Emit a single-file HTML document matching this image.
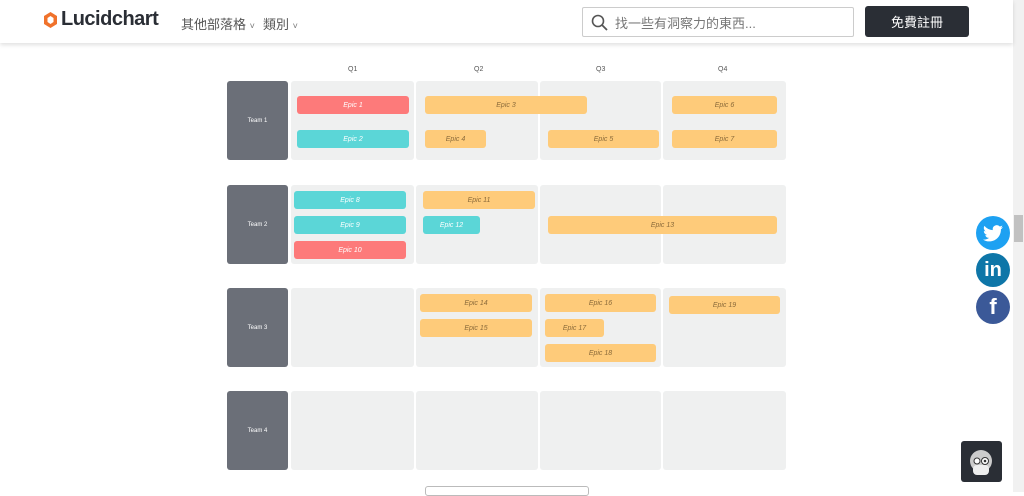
<!DOCTYPE html><html><head><meta charset="utf-8"><style>
*{margin:0;padding:0;box-sizing:border-box}
body{width:1024px;height:492px;overflow:hidden;background:#fff;position:relative;font-family:"Liberation Sans","Noto Sans CJK TC",sans-serif}
.a{position:absolute}
.hdr{left:0;top:0;width:1013px;height:43px;background:#fff;box-shadow:0 2px 4px rgba(0,0,0,.12);z-index:2}
.cell{background:#eff0f0;border-radius:3px}
.team{background:#6b6f78;border-radius:3px;color:#fff;font-size:6px;display:flex;align-items:center;justify-content:center}
.b{border-radius:3px;font-size:7px;font-style:italic;display:flex;align-items:center;justify-content:center;height:18px}
.r{background:#fd7a7a;color:#fff}.t{background:#5bd6d7;color:#fff}.o{background:#fecb7a;color:#8a6a3a}
.q{font-size:7px;color:#555;top:66px}
.soc{width:34px;height:34px;border-radius:50%;color:#fff;font-weight:bold;display:flex;align-items:center;justify-content:center}
.chev{font-size:9px;color:#777}
</style></head><body>
<div class="a hdr">
 <div class="a" style="left:44px;top:12px;width:13px;height:16px">
  <svg width="13" height="16" viewBox="0 0 13 16"><path d="M6.5 0L13 4v8L6.5 16 0 12V4z" fill="#f0722b"/><path d="M6.5 4L9.5 6v4L6.5 12 3.5 10V6z" fill="#fff"/></svg></div>
 <div class="a" style="left:61px;top:8px;font-size:20px;font-weight:bold;color:#2a2e35;letter-spacing:-0.5px">Lucidchart</div>
 <div class="a" style="left:181px;top:14px;font-size:13px;color:#555">其他部落格 <span class="chev">˅</span></div>
 <div class="a" style="left:263px;top:14px;font-size:13px;color:#555">類別 <span class="chev">˅</span></div>
 <div class="a" style="left:582px;top:7px;width:272px;height:30px;border:1px solid #ccc;border-radius:2px">
  <svg class="a" style="left:8px;top:6px" width="18" height="18" viewBox="0 0 18 18"><circle cx="7" cy="7" r="5.5" stroke="#555" stroke-width="1.6" fill="none"/><path d="M11 11l5 5" stroke="#555" stroke-width="1.8"/></svg>
  <div class="a" style="left:32px;top:5px;font-size:13px;color:#777">找一些有洞察力的東西...</div></div>
 <div class="a" style="left:865px;top:6px;width:104px;height:31px;background:#2a2e35;border-radius:3px;color:#fff;font-size:13px;display:flex;align-items:center;justify-content:center">免費註冊</div>
</div>
<div class="a" style="left:1013px;top:0;width:11px;height:492px;background:#f1f1f1"></div>
<div class="a" style="left:1014px;top:215px;width:9px;height:27px;background:#c1c1c1"></div>

<div class="a q" style="left:348px">Q1</div><div class="a q" style="left:474px">Q2</div><div class="a q" style="left:596px">Q3</div><div class="a q" style="left:718px">Q4</div>

<div class="a team" style="left:227px;top:81px;width:61px;height:79px">Team 1</div>
<div class="a team" style="left:227px;top:185px;width:61px;height:79px">Team 2</div>
<div class="a team" style="left:227px;top:288px;width:61px;height:79px">Team 3</div>
<div class="a team" style="left:227px;top:391px;width:61px;height:79px">Team 4</div>

<div class="a cell" style="left:291px;top:81px;width:123px;height:79px"></div><div class="a cell" style="left:416px;top:81px;width:122px;height:79px"></div><div class="a cell" style="left:540px;top:81px;width:121px;height:79px"></div><div class="a cell" style="left:663px;top:81px;width:123px;height:79px"></div>
<div class="a cell" style="left:291px;top:185px;width:123px;height:79px"></div><div class="a cell" style="left:416px;top:185px;width:122px;height:79px"></div><div class="a cell" style="left:540px;top:185px;width:121px;height:79px"></div><div class="a cell" style="left:663px;top:185px;width:123px;height:79px"></div>
<div class="a cell" style="left:291px;top:288px;width:123px;height:79px"></div><div class="a cell" style="left:416px;top:288px;width:122px;height:79px"></div><div class="a cell" style="left:540px;top:288px;width:121px;height:79px"></div><div class="a cell" style="left:663px;top:288px;width:123px;height:79px"></div>
<div class="a cell" style="left:291px;top:391px;width:123px;height:79px"></div><div class="a cell" style="left:416px;top:391px;width:122px;height:79px"></div><div class="a cell" style="left:540px;top:391px;width:121px;height:79px"></div><div class="a cell" style="left:663px;top:391px;width:123px;height:79px"></div>

<div class="a b r" style="left:297px;top:96px;width:112px">Epic 1</div>
<div class="a b t" style="left:297px;top:130px;width:112px">Epic 2</div>
<div class="a b o" style="left:425px;top:96px;width:162px">Epic 3</div>
<div class="a b o" style="left:425px;top:130px;width:61px">Epic 4</div>
<div class="a b o" style="left:548px;top:130px;width:111px">Epic 5</div>
<div class="a b o" style="left:672px;top:96px;width:105px">Epic 6</div>
<div class="a b o" style="left:672px;top:130px;width:105px">Epic 7</div>
<div class="a b t" style="left:294px;top:191px;width:112px">Epic 8</div>
<div class="a b t" style="left:294px;top:216px;width:112px">Epic 9</div>
<div class="a b r" style="left:294px;top:241px;width:112px">Epic 10</div>
<div class="a b o" style="left:423px;top:191px;width:112px">Epic 11</div>
<div class="a b t" style="left:423px;top:216px;width:57px">Epic 12</div>
<div class="a b o" style="left:548px;top:216px;width:229px">Epic 13</div>
<div class="a b o" style="left:420px;top:294px;width:112px">Epic 14</div>
<div class="a b o" style="left:420px;top:319px;width:112px">Epic 15</div>
<div class="a b o" style="left:545px;top:294px;width:111px">Epic 16</div>
<div class="a b o" style="left:545px;top:319px;width:59px">Epic 17</div>
<div class="a b o" style="left:545px;top:344px;width:111px">Epic 18</div>
<div class="a b o" style="left:669px;top:296px;width:111px">Epic 19</div>

<div class="a" style="left:425px;top:486px;width:164px;height:10px;border:1px solid #bbb;border-radius:3px"></div>

<div class="a soc" style="left:976px;top:216px;background:#1da1f2;font-size:18px">
 <svg width="20" height="17" viewBox="0 0 24 20"><path d="M24 2.4a10 10 0 0 1-2.8.8A5 5 0 0 0 23.3.4a10 10 0 0 1-3.1 1.2A4.9 4.9 0 0 0 11.8 6 14 14 0 0 1 1.7.9a4.9 4.9 0 0 0 1.5 6.6A4.9 4.9 0 0 1 1 6.9 4.9 4.9 0 0 0 4.9 11.8 5 5 0 0 1 2.7 11.9 4.9 4.9 0 0 0 7.3 15.3 9.9 9.9 0 0 1 0 17.3 14 14 0 0 0 7.5 19.5c9.1 0 14-7.5 14-14v-.6A10 10 0 0 0 24 2.4z" fill="#fff"/></svg></div>
<div class="a soc" style="left:976px;top:253px;background:#0e76a8;font-size:20px">in</div>
<div class="a soc" style="left:976px;top:290px;background:#3b5998;font-size:22px">f</div>
<div class="a" style="left:961px;top:441px;width:41px;height:41px;background:#2a2e35;border-radius:3px">
 <svg width="41" height="41" viewBox="0 0 41 41"><circle cx="20" cy="20" r="11" fill="#ccc"/><rect x="12" y="24" width="16" height="10" rx="4" fill="#eee"/><circle cx="16" cy="20" r="3" fill="#fff" stroke="#333"/><circle cx="24" cy="20" r="3.5" fill="#fff" stroke="#333"/><circle cx="24" cy="20" r="1.3" fill="#333"/></svg></div>
</body></html>
